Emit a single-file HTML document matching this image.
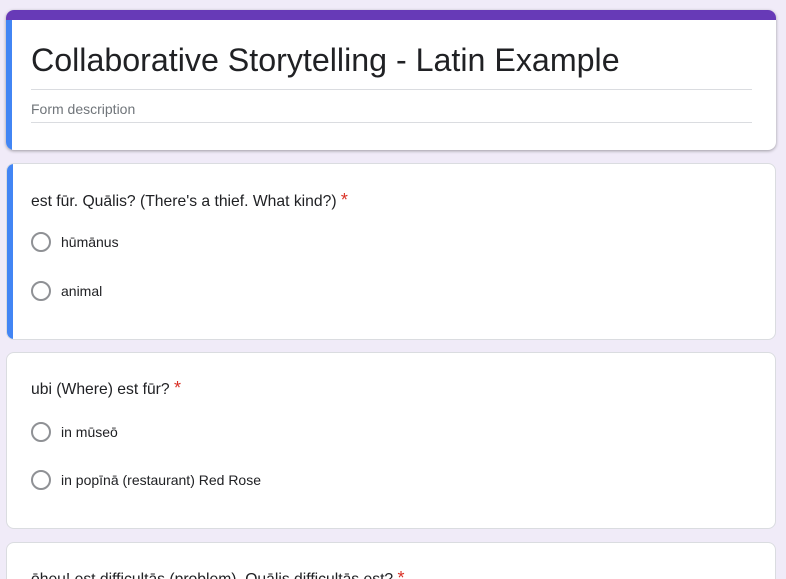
<!DOCTYPE html>
<html><head><style>
html,body{margin:0;width:786px;height:579px;overflow:hidden}
body{background:#f0ebf8;font-family:"Liberation Sans",Arial,sans-serif;color:#202124;position:relative}
.card{position:absolute;left:6px;width:770px;background:#fff;border:1px solid #dadce0;border-radius:8px;box-sizing:border-box;overflow:hidden}
.lb{position:absolute;left:0;top:0;bottom:0;width:6px;background:#4285f4}
.q{position:absolute;left:24px;font-size:15.7px;white-space:nowrap}
.q span{color:#d93025;font-size:18px}
.opt{position:absolute;left:24px;font-size:14px;display:flex;align-items:center}
.r{width:16px;height:16px;border:2px solid #5f6368;border-radius:50%;margin-right:10px;opacity:.7}
</style></head><body>
<div class="card" style="top:10px;height:140px;border:none;box-shadow:0 1px 3px rgba(0,0,0,.35)">
 <div style="position:absolute;left:0;right:0;top:0;height:10px;background:#673ab7"></div>
 <div class="lb" style="top:10px"></div>
 <div style="position:absolute;left:25px;top:32px;font-size:32.2px;white-space:nowrap">Collaborative Storytelling - Latin Example</div>
 <div style="position:absolute;left:25px;right:24px;top:79px;border-top:1px solid #dadce0"></div>
 <div style="position:absolute;left:25px;top:91px;font-size:14px;color:#70757a">Form description</div>
 <div style="position:absolute;left:25px;right:24px;top:112px;border-top:1px solid #dadce0"></div>
</div>
<div class="card" style="top:163px;height:177px">
 <div class="lb"></div>
 <div class="q" style="top:26px">est fūr. Quālis? (There's a thief. What kind?) <span>*</span></div>
 <div class="opt" style="top:68px"><div class="r"></div>hūmānus</div>
 <div class="opt" style="top:117px"><div class="r"></div>animal</div>
</div>
<div class="card" style="top:352px;height:177px">
 <div class="q" style="top:25px">ubi (Where) est fūr? <span>*</span></div>
 <div class="opt" style="top:69px"><div class="r"></div>in mūseō</div>
 <div class="opt" style="top:117px"><div class="r"></div>in popīnā (restaurant) Red Rose</div>
</div>
<div class="card" style="top:542px;height:37px;border-bottom:none;border-radius:8px 8px 0 0">
 <div class="q" style="top:25px">ōheu! est difficultās (problem). Quālis difficultās est? <span>*</span></div>
</div>
</body></html>
